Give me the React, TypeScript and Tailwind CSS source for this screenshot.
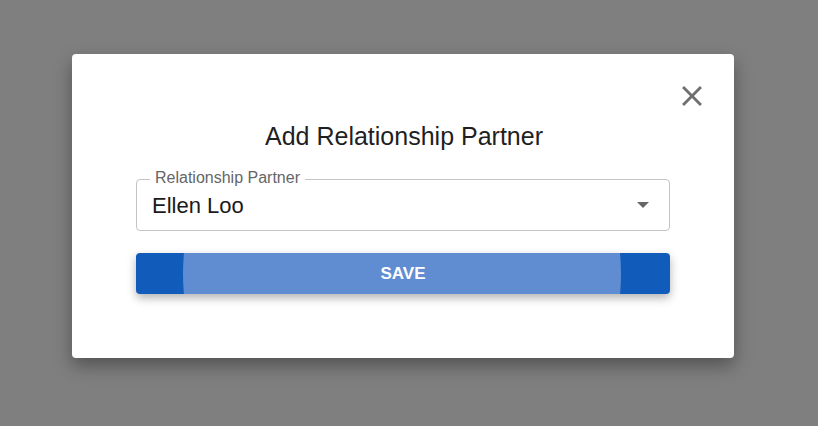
import React from 'react'

// Modal dialog over a dimmed backdrop: title, outlined select, save button
// caught mid-ripple.

function CloseIcon() {
  return (
    <svg width="34" height="34" viewBox="0 0 24 24" fill="#6f6f6f" aria-hidden>
      <path d="M19 6.41 17.59 5 12 10.59 6.41 5 5 6.41 10.59 12 5 17.59 6.41 19 12 13.41 17.59 19 19 17.59 13.41 12z" />
    </svg>
  )
}

export default function App() {
  return (
    <div
      className="w-[818px] h-[426px] bg-[#7f7f7f] pl-[72px] pt-[54px]"
      style={{ fontFamily: '"Liberation Sans", Arial, sans-serif' }}
    >
      <div className="w-[662px] h-[304px] bg-white rounded-[4px] shadow-[0_8px_18px_rgba(0,0,0,0.35)] pt-[25px] pr-[25px] flex flex-col">
        <div className="flex justify-end">
          <button type="button" aria-label="Close" className="w-[34px] h-[34px] flex items-center justify-center">
            <CloseIcon />
          </button>
        </div>

        <div className="pl-[64px] pr-[39px] mt-[7px] flex flex-col">
          <h2 className="text-center text-[25px] leading-[32px] text-[#1f1f1f] pl-[2px]">
            Add Relationship Partner
          </h2>

          <div className="relative mt-[27px] h-[52px] border border-[#c4c4c4] rounded-[4px] pl-[15px] pr-[20px] flex items-center">
            <span className="absolute left-[13px] -top-[10px] px-[5px] bg-white text-[16px] leading-[16px] text-[#666]">
              Relationship Partner
            </span>
            <span className="text-[22px] leading-[26px] text-[#1a1a1a] mt-[2px]">Ellen Loo</span>
            <svg className="ml-auto" width="12" height="6" viewBox="0 0 12 6" aria-hidden>
              <path d="M0 0h12L6 6z" fill="#666" />
            </svg>
          </div>

          <button
            type="button"
            className="relative mt-[22px] w-full h-[41px] rounded-[4px] bg-[#115cbb] overflow-hidden shadow-[0_4px_10px_rgba(0,0,0,0.3)] flex items-center justify-center"
          >
            <span className="absolute left-[47px] top-1/2 -translate-y-1/2 w-[438px] h-[438px] rounded-full bg-[#608dd2]" />
            <span className="relative text-white text-[17px] font-bold">SAVE</span>
          </button>
        </div>
      </div>
    </div>
  )
}
